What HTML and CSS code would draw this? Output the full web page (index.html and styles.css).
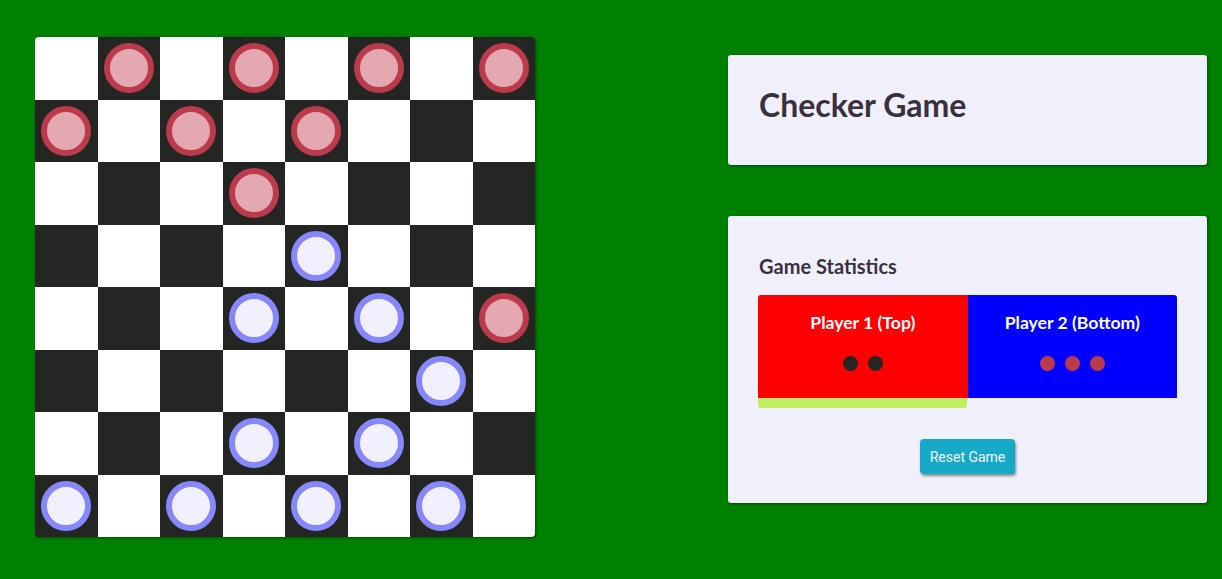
FILE: index.html
```html
<!DOCTYPE html>
<html lang="en">
<head>
<meta charset="utf-8">
<title>Checker Game</title>
<link rel="stylesheet" href="styles.css">
</head>
<body>
<main class="page">
  <section class="board">
    <div class="sq light"></div><div class="sq dark"><span class="piece red"></span></div><div class="sq light"></div><div class="sq dark"><span class="piece red"></span></div><div class="sq light"></div><div class="sq dark"><span class="piece red"></span></div><div class="sq light"></div><div class="sq dark"><span class="piece red"></span></div>
    <div class="sq dark"><span class="piece red"></span></div><div class="sq light"></div><div class="sq dark"><span class="piece red"></span></div><div class="sq light"></div><div class="sq dark"><span class="piece red"></span></div><div class="sq light"></div><div class="sq dark"></div><div class="sq light"></div>
    <div class="sq light"></div><div class="sq dark"></div><div class="sq light"></div><div class="sq dark"><span class="piece red"></span></div><div class="sq light"></div><div class="sq dark"></div><div class="sq light"></div><div class="sq dark"></div>
    <div class="sq dark"></div><div class="sq light"></div><div class="sq dark"></div><div class="sq light"></div><div class="sq dark"><span class="piece blue"></span></div><div class="sq light"></div><div class="sq dark"></div><div class="sq light"></div>
    <div class="sq light"></div><div class="sq dark"></div><div class="sq light"></div><div class="sq dark"><span class="piece blue"></span></div><div class="sq light"></div><div class="sq dark"><span class="piece blue"></span></div><div class="sq light"></div><div class="sq dark"><span class="piece red"></span></div>
    <div class="sq dark"></div><div class="sq light"></div><div class="sq dark"></div><div class="sq light"></div><div class="sq dark"></div><div class="sq light"></div><div class="sq dark"><span class="piece blue"></span></div><div class="sq light"></div>
    <div class="sq light"></div><div class="sq dark"></div><div class="sq light"></div><div class="sq dark"><span class="piece blue"></span></div><div class="sq light"></div><div class="sq dark"><span class="piece blue"></span></div><div class="sq light"></div><div class="sq dark"></div>
    <div class="sq dark"><span class="piece blue"></span></div><div class="sq light"></div><div class="sq dark"><span class="piece blue"></span></div><div class="sq light"></div><div class="sq dark"><span class="piece blue"></span></div><div class="sq light"></div><div class="sq dark"><span class="piece blue"></span></div><div class="sq light"></div>
  </section>

  <aside class="side">
    <div class="card title-card">
      <h1 class="title">Checker Game</h1>
    </div>
    <div class="card stats-card">
      <h2 class="stats-title">Game Statistics</h2>
      <div class="players">
        <div class="player p1">
          <div class="player-name">Player 1 (Top)</div>
          <div class="captured">
            <span class="dot dark-dot"></span><span class="dot dark-dot"></span>
          </div>
        </div>
        <div class="player p2">
          <div class="player-name">Player 2 (Bottom)</div>
          <div class="captured">
            <span class="dot red-dot"></span><span class="dot red-dot"></span><span class="dot red-dot"></span>
          </div>
        </div>
      </div>
      <div class="turn-row">
        <div class="turn-bar"></div>
        <div></div>
      </div>
      <div class="actions">
        <button class="reset-btn" type="button">Reset Game</button>
      </div>
    </div>
  </aside>
</main>
</body>
</html>
```

FILE: styles.css
```css
* {
  box-sizing: border-box;
}

html, body {
  margin: 0;
  padding: 0;
}

body {
  background: #008000;
  font-family: Lato, "Liberation Sans", sans-serif;
  width: 1222px;
  height: 579px;
  overflow: hidden;
}

.page {
  display: flex;
  justify-content: space-between;
  align-items: flex-start;
  padding: 37px 15px 0 35px;
}

/* 8x8 board */
.board {
  width: 500px;
  height: 500px;
  display: grid;
  grid-template-columns: repeat(8, 62.5px);
  grid-template-rows: repeat(8, 62.5px);
  border-radius: 4px;
  overflow: hidden;
  box-shadow: 1px 1px 3px rgba(0, 0, 0, 0.45);
}

.sq {
  display: flex;
  align-items: center;
  justify-content: center;
}

.sq.light {
  background: #ffffff;
}

.sq.dark {
  background: #232622;
}

.piece {
  width: 50px;
  height: 50px;
  border-radius: 50%;
  border: 6px solid;
}

.piece.red {
  background: #e4a8b1;
  border-color: #bb3a4c;
}

.piece.blue {
  background: #f0f0ff;
  border-color: #8787ff;
}

/* right column */
.side {
  width: 479px;
  margin-top: 18px;
  display: flex;
  flex-direction: column;
  gap: 51px;
}

.card {
  background: #f0f0fd;
  border-radius: 3px;
  box-shadow: 1px 1px 3px rgba(0, 0, 0, 0.5);
  padding: 30px;
}

.title-card {
  height: 110px;
  display: flex;
  align-items: center;
  padding-top: 0;
  padding-bottom: 10px;
}

.title {
  margin: 0;
  font-size: 32px;
  font-weight: 700;
  color: #3a3040;
  line-height: 1;
  padding-left: 1px;
}

.stats-card {
  height: 287px;
  padding-top: 38px;
}

.stats-title {
  margin: 0;
  font-size: 20px;
  font-weight: 700;
  color: #3a3040;
  line-height: 24px;
  padding-left: 1px;
}

.players {
  margin-top: 17px;
  display: grid;
  grid-template-columns: 1fr 1fr;
  height: 103px;
  border-radius: 3px 3px 0 0;
  overflow: hidden;
}

.player {
  display: flex;
  flex-direction: column;
  align-items: center;
  padding-top: 17px;
  color: #ffffff;
}

.p1 {
  background: #ff0000;
}

.p2 {
  background: #0000ff;
}

.player-name {
  font-size: 17.6px;
  font-weight: 700;
  line-height: 22px;
}

.captured {
  display: flex;
  gap: 10px;
  margin-top: 22px;
}

.dot {
  width: 15px;
  height: 15px;
  border-radius: 50%;
}

.dark-dot {
  background: #232622;
}

.red-dot {
  background: #bb3a4c;
}

.turn-row {
  display: grid;
  grid-template-columns: 209px 1fr;
  height: 10px;
}

.turn-bar {
  background: #c0ee63;
  border-radius: 0 0 3px 3px;
}

.actions {
  display: flex;
  justify-content: center;
  margin-top: 31px;
}

.reset-btn {
  width: 95px;
  height: 35px;
  border: none;
  border-radius: 4px;
  background: #16a9c8;
  color: #f4f6ff;
  font-family: Roboto, "Liberation Sans", sans-serif;
  font-size: 14px;
  box-shadow: 1px 2px 3px rgba(0, 0, 0, 0.45);
  padding: 0;
}
```
